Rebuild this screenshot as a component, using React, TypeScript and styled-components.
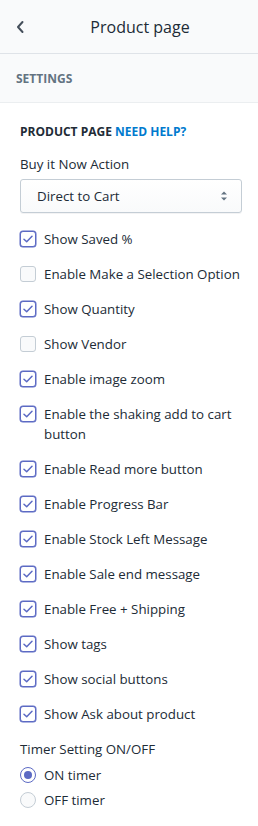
import React from "react";
import styled, { createGlobalStyle } from "styled-components";

const GlobalStyle = createGlobalStyle`
  html, body {
    margin: 0;
    padding: 0;
    background: #ffffff;
  }
  body {
    font-family: "Open Sans", "Noto Sans", sans-serif;
    color: #212b36;
  }
  * {
    box-sizing: border-box;
  }
`;

const Panel = styled.div`
  width: 258px;
  min-height: 826px;
  background: #ffffff;
`;

const Header = styled.header`
  display: flex;
  align-items: center;
  height: 54px;
  background: #f9fafb;
  border-bottom: 1px solid #dfe3e8;
`;

const BackButton = styled.button`
  display: flex;
  align-items: center;
  justify-content: center;
  width: 40px;
  height: 52px;
  padding: 0;
  border: none;
  background: transparent;
  color: #454f5b;
  cursor: pointer;
`;

const Title = styled.h1`
  flex: 1;
  margin: 0;
  padding-right: 18px;
  text-align: center;
  font-size: 16px;
  font-weight: 500;
  color: #212b36;
`;

const SectionBar = styled.div`
  display: flex;
  align-items: center;
  height: 49px;
  padding: 0 16px;
  background: #f9fafb;
  border-bottom: 1px solid #ebeef0;
  font-size: 12px;
  font-weight: 700;
  color: #637381;
  text-transform: uppercase;
`;

const Body = styled.div`
  display: flex;
  flex-direction: column;
  padding: 21px 16px 20px 20px;
`;

const Heading = styled.h2`
  margin: 0 0 14px;
  font-size: 12px;
  line-height: 16px;
  font-weight: 700;
  text-transform: uppercase;
  color: #212b36;

  a {
    color: #007ace;
    text-decoration: none;
  }
`;

const FieldLabel = styled.div`
  font-size: 13.3px;
  line-height: 20px;
  color: #212b36;
`;

const SelectBox = styled.div`
  display: flex;
  align-items: center;
  justify-content: space-between;
  height: 34px;
  margin: 5px 0 16px;
  padding: 0 13px 0 16px;
  border: 1px solid #c4cdd5;
  border-radius: 3px;
  background: linear-gradient(#ffffff, #f9fafb);
  box-shadow: 0 1px 0 rgba(22, 29, 37, 0.05);
  font-size: 13.3px;
  color: #212b36;
`;

const Options = styled.div`
  display: flex;
  flex-direction: column;
  gap: 15px;
`;

const Choice = styled.label`
  display: flex;
  align-items: flex-start;
  gap: 8px;
  font-size: 13.3px;
  line-height: 20px;
  color: #212b36;
`;

const Box = styled.span<{ $checked: boolean }>`
  flex: none;
  display: flex;
  align-items: center;
  justify-content: center;
  width: 16px;
  height: 16px;
  margin-top: 2px;
  border: 1px solid ${(p) => (p.$checked ? "#5c6ac4" : "#c4cdd5")};
  border-radius: 3px;
  background: ${(p) => (p.$checked ? "#ffffff" : "#f9fafb")};
  box-shadow: ${(p) => (p.$checked ? "0 0 0 0.5px #5c6ac4" : "none")};
`;

const RadioGroup = styled.div`
  display: flex;
  flex-direction: column;
  gap: 5px;
  margin-top: 6px;
`;

const RadioChoice = styled.label`
  display: flex;
  align-items: center;
  gap: 8px;
  font-size: 13.3px;
  line-height: 20px;
  color: #212b36;
`;

const RadioDot = styled.span<{ $checked: boolean }>`
  flex: none;
  display: flex;
  align-items: center;
  justify-content: center;
  width: 16px;
  height: 16px;
  border-radius: 50%;
  border: 1px solid ${(p) => (p.$checked ? "#5c6ac4" : "#c4cdd5")};
  background: ${(p) => (p.$checked ? "#ffffff" : "#f9fafb")};

  &::after {
    content: "";
    display: ${(p) => (p.$checked ? "block" : "none")};
    width: 8px;
    height: 8px;
    border-radius: 50%;
    background: #5c6ac4;
  }
`;

const Chevron = () => (
  <svg width="10" height="14" viewBox="0 0 10 14" fill="none">
    <path d="M7.5 2L3 7l4.5 5" stroke="currentColor" strokeWidth="2" strokeLinecap="round" strokeLinejoin="round" />
  </svg>
);

const SelectArrows = () => (
  <svg width="8" height="12" viewBox="0 0 8 12">
    <path d="M4 1.5L7 4.5H1z" fill="#637381" />
    <path d="M4 10.5L1 7.5h6z" fill="#637381" />
  </svg>
);

const Tick = () => (
  <svg width="10" height="8" viewBox="0 0 10 8" fill="none">
    <path d="M1 4.2l2.7 2.6L9 1.3" stroke="#5c6ac4" strokeWidth="1.5" strokeLinecap="round" strokeLinejoin="round" />
  </svg>
);

const options: { label: string; checked: boolean }[] = [
  { label: "Show Saved %", checked: true },
  { label: "Enable Make a Selection Option", checked: false },
  { label: "Show Quantity", checked: true },
  { label: "Show Vendor", checked: false },
  { label: "Enable image zoom", checked: true },
  { label: "Enable the shaking add to cart button", checked: true },
  { label: "Enable Read more button", checked: true },
  { label: "Enable Progress Bar", checked: true },
  { label: "Enable Stock Left Message", checked: true },
  { label: "Enable Sale end message", checked: true },
  { label: "Enable Free + Shipping", checked: true },
  { label: "Show tags", checked: true },
  { label: "Show social buttons", checked: true },
  { label: "Show Ask about product", checked: true },
];

export default function App() {
  return (
    <Panel>
      <GlobalStyle />
      <Header>
        <BackButton aria-label="Back">
          <Chevron />
        </BackButton>
        <Title>Product page</Title>
      </Header>
      <SectionBar>Settings</SectionBar>
      <Body>
        <Heading>
          Product page <a href="#">Need help?</a>
        </Heading>
        <FieldLabel>Buy it Now Action</FieldLabel>
        <SelectBox>
          <span>Direct to Cart</span>
          <SelectArrows />
        </SelectBox>
        <Options>
          {options.map((o) => (
            <Choice key={o.label}>
              <Box $checked={o.checked}>{o.checked && <Tick />}</Box>
              <span>{o.label}</span>
            </Choice>
          ))}
          <FieldLabel>Timer Setting ON/OFF</FieldLabel>
        </Options>
        <RadioGroup>
          <RadioChoice>
            <RadioDot $checked={true} />
            ON timer
          </RadioChoice>
          <RadioChoice>
            <RadioDot $checked={false} />
            OFF timer
          </RadioChoice>
        </RadioGroup>
      </Body>
    </Panel>
  );
}
